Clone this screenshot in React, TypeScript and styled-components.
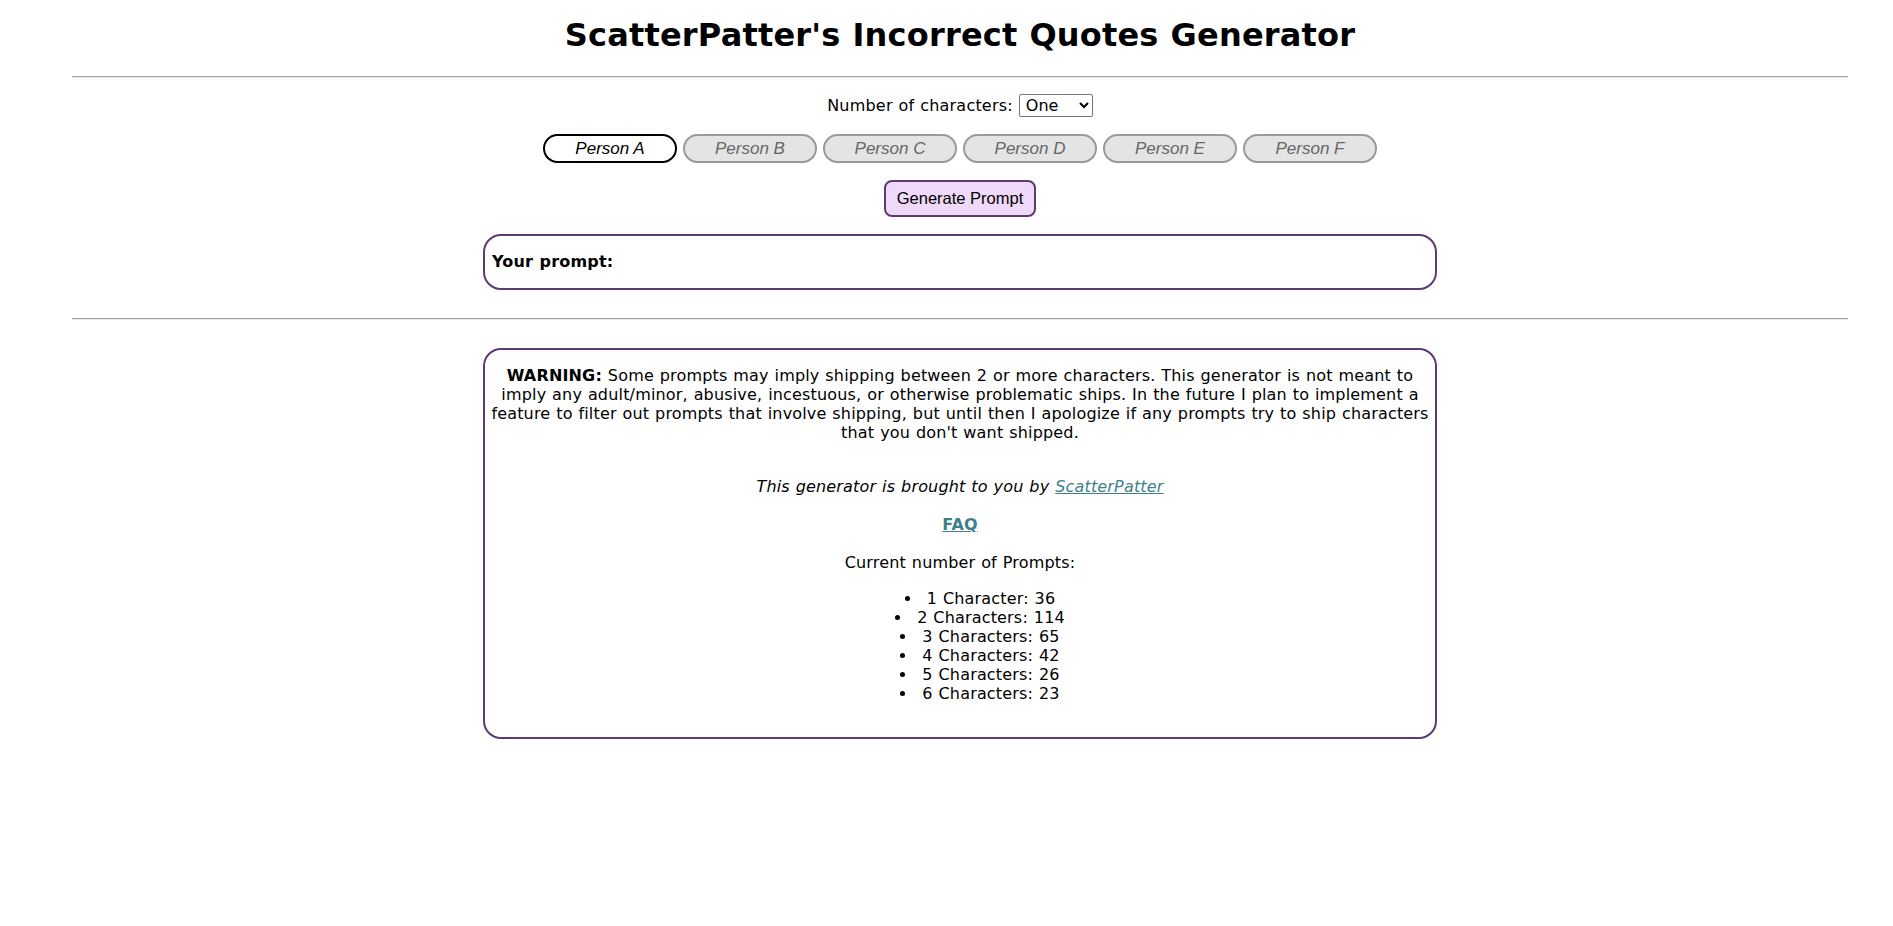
import React, { useState } from 'react';
import styled, { createGlobalStyle } from 'styled-components';

const purple = '#5c3a72';
const link = '#3f7f8b';

const GlobalStyle = createGlobalStyle`
  body {
    margin: 0;
    background: #fff;
    overflow-x: hidden;
    font-family: "DejaVu Sans", Verdana, sans-serif;
    font-size: 16px;
    letter-spacing: 0.2px;
    word-spacing: 0.6px;
    color: #000;
  }
`;

const Page = styled.div`
  width: 1920px;
  box-sizing: border-box;
  padding: 16px 8px 40px;
`;

const Title = styled.h1`
  margin: 0;
  font-size: 32px;
  line-height: 38px;
  font-weight: bold;
  text-align: center;
`;

const Rule = styled.hr<{ $gap: number }>`
  margin: ${(p) => p.$gap}px 64px 0;
  height: 0;
  border: 0;
  border-top: 1px solid #a0a0a0;
  border-bottom: 1px solid #ececec;
`;

const CharRow = styled.div`
  display: flex;
  justify-content: center;
  align-items: center;
  gap: 6px;
  margin-top: 16px;
  height: 23px;
  line-height: 19px;
`;

const Select = styled.select`
  width: 74px;
  height: 23px;
  box-sizing: border-box;
  padding: 0 2px;
  border: 1px solid #767676;
  border-radius: 2px;
  background: #fff;
  font-family: "DejaVu Sans", Verdana, sans-serif;
  font-size: 16px;
  color: #000;
`;

const PersonRow = styled.div`
  display: flex;
  justify-content: center;
  gap: 6px;
  margin-top: 17px;
`;

const PersonButton = styled.button<{ $active: boolean }>`
  width: 134px;
  height: 29px;
  box-sizing: border-box;
  padding: 0;
  border: 2px solid ${(p) => (p.$active ? '#000' : '#999')};
  border-radius: 15px;
  background: ${(p) => (p.$active ? '#fff' : '#e4e4e4')};
  color: ${(p) => (p.$active ? '#000' : '#666')};
  font-family: "Liberation Sans", Arial, sans-serif;
  font-style: italic;
  font-size: 17px;
  cursor: pointer;
`;

const GenerateButton = styled.button`
  display: block;
  margin: 17px auto 0;
  width: 152px;
  height: 37px;
  box-sizing: border-box;
  padding: 0;
  border: 2px solid ${purple};
  border-radius: 8px;
  background: #f0d8f8;
  color: #000;
  font-family: "Liberation Sans", Arial, sans-serif;
  font-size: 16.5px;
  cursor: pointer;
`;

const Box = styled.div`
  width: 954px;
  box-sizing: border-box;
  margin: 0 auto;
  border: 2px solid ${purple};
  border-radius: 18px;
`;

const PromptBox = styled(Box)`
  margin-top: 17px;
  padding: 16px 7px;
  line-height: 20px;
  font-weight: bold;
`;

const InfoBox = styled(Box)`
  margin-top: 28px;
  padding: 15.5px 0 34px;
  text-align: center;
  line-height: 19px;
  letter-spacing: 0.17px;
`;

const Para = styled.p<{ $gap?: number }>`
  margin: ${(p) => p.$gap ?? 0}px 0 0;
`;

const Credit = styled(Para)`
  font-style: italic;
`;

const Link = styled.a`
  color: ${link};
  text-decoration: underline;
`;

const StatList = styled.ul`
  margin: 17px 0 0;
  padding-left: 40px;
  list-style: disc inside;
`;

const people = ['Person A', 'Person B', 'Person C', 'Person D', 'Person E', 'Person F'];

const counts = [
  ['1 Character', 36],
  ['2 Characters', 114],
  ['3 Characters', 65],
  ['4 Characters', 42],
  ['5 Characters', 26],
  ['6 Characters', 23],
] as const;

export default function App() {
  const [count, setCount] = useState(1);

  return (
    <Page>
      <GlobalStyle />
      <Title>ScatterPatter's Incorrect Quotes Generator</Title>
      <Rule $gap={22} />

      <CharRow>
        <span>Number of characters:</span>
        <Select value={count} onChange={(e) => setCount(Number(e.target.value))}>
          <option value={1}>One</option>
          <option value={2}>Two</option>
          <option value={3}>Three</option>
          <option value={4}>Four</option>
          <option value={5}>Five</option>
          <option value={6}>Six</option>
        </Select>
      </CharRow>

      <PersonRow>
        {people.map((name, i) => (
          <PersonButton key={name} $active={i < count}>
            {name}
          </PersonButton>
        ))}
      </PersonRow>

      <GenerateButton>Generate Prompt</GenerateButton>

      <PromptBox>Your prompt:</PromptBox>

      <Rule $gap={28} />

      <InfoBox>
        <Para>
          <b>WARNING:</b> Some prompts may imply shipping between 2 or more characters. This
          generator is not meant to imply any adult/minor, abusive, incestuous, or otherwise
          problematic ships. In the future I plan to implement a feature to filter out prompts
          that involve shipping, but until then I apologize if any prompts try to ship
          characters that you don't want shipped.
        </Para>
        <Credit $gap={35.5}>
          This generator is brought to you by <Link href="#">ScatterPatter</Link>
        </Credit>
        <Para $gap={19}>
          <Link href="#">
            <b>FAQ</b>
          </Link>
        </Para>
        <Para $gap={19}>Current number of Prompts:</Para>
        <StatList>
          {counts.map(([label, n]) => (
            <li key={label}>
              {label}: {n}
            </li>
          ))}
        </StatList>
      </InfoBox>
    </Page>
  );
}
